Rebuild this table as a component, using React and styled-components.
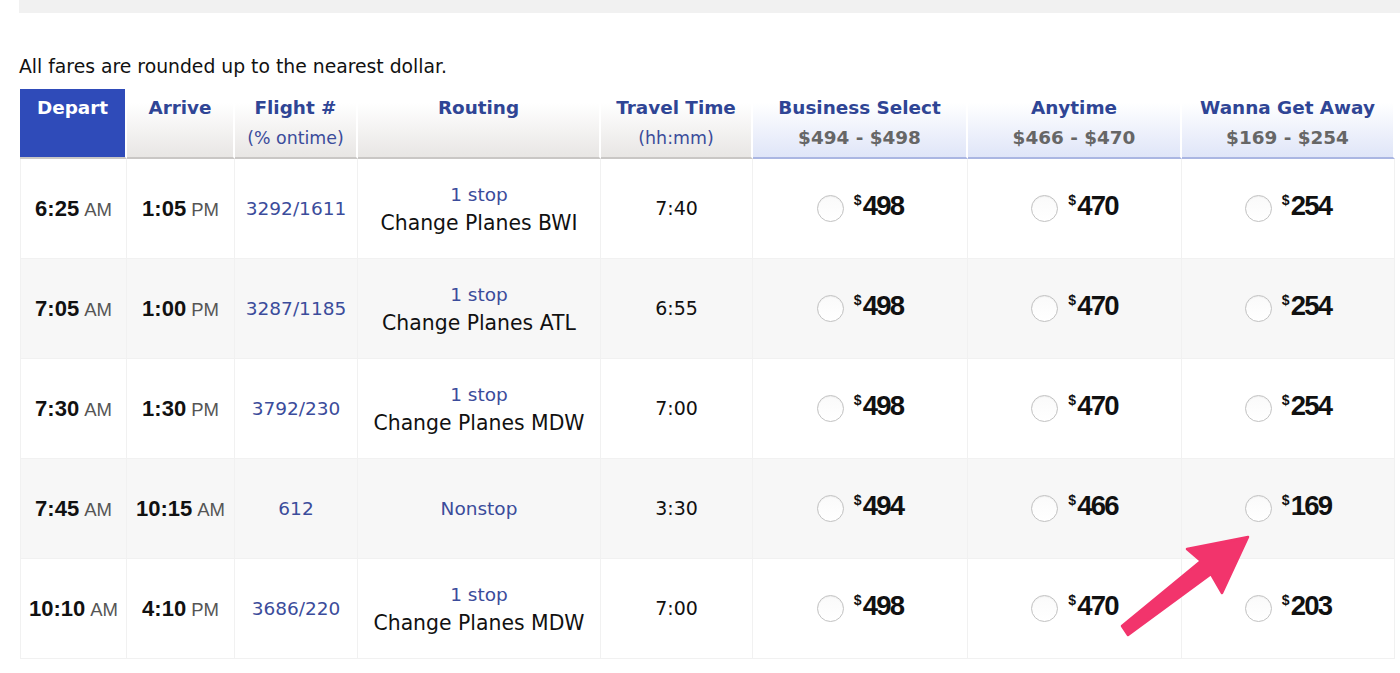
import React from "react"
import styled, { createGlobalStyle } from "styled-components"

const GlobalStyle = createGlobalStyle`
  html, body {
    margin: 0;
    padding: 0;
    background: #fff;
  }
  body {
    font-family: "DejaVu Sans", Verdana, sans-serif;
    color: #111;
  }
`

const Page = styled.div`
  position: relative;
  width: 1400px;
  height: 673px;
  overflow: hidden;
`

const TopBar = styled.div`
  height: 13px;
  margin-left: 19px;
  background: #f1f1f1;
`

const Note = styled.p`
  margin: 43px 0 11px 19px;
  font-size: 18.8px;
  line-height: 22px;
  color: #111;
`

const Table = styled.div`
  display: grid;
  grid-template-columns: 107px 108px 123px 243px 152px 215px 214px 213px;
  margin-left: 20px;
  width: 1375px;
`

const HeadCell = styled.div`
  box-sizing: border-box;
  height: 70px;
  padding-top: 8px;
  text-align: center;
  border-right: 2px solid #fff;
  border-bottom: 2px solid ${p => (p.$fare ? "#aab6e2" : "#c9c7c5")};
  background: ${p =>
    p.$active
      ? "#2f4bb9"
      : p.$fare
      ? "linear-gradient(#fff 20%, #dfe5f8)"
      : "linear-gradient(#fff 20%, #e8e6e4)"};
  &:last-child {
    border-right: none;
  }
`

const HeadTitle = styled.div`
  font-weight: bold;
  font-size: 18.4px;
  line-height: 22px;
  color: ${p => (p.$active ? "#fff" : "#2f4595")};
`

const HeadSub = styled.div`
  margin-top: 8px;
  font-size: 17.4px;
  line-height: 22px;
  color: #3b4c9b;
`

const FareRange = styled.div`
  margin-top: 8px;
  font-weight: bold;
  font-size: 18.4px;
  line-height: 22px;
  color: #666;
`

const Cell = styled.div`
  box-sizing: border-box;
  height: 100px;
  display: flex;
  flex-direction: column;
  align-items: center;
  justify-content: center;
  text-align: center;
  background: ${p => (p.$alt ? "#f7f7f7" : "#fff")};
  border-right: 1px solid #f1f1f1;
  border-bottom: 1px solid #f1f1f1;
  &:nth-child(8n + 1) {
    border-left: 1px solid #f1f1f1;
  }
`

const Time = styled.div`
  font-family: "Liberation Sans", Arial, sans-serif;
  white-space: nowrap;
  b {
    font-size: 22px;
    color: #111;
  }
  span {
    font-size: 18.5px;
    color: #555;
    margin-left: 5px;
  }
`

const LinkText = styled.div`
  font-size: 18.5px;
  line-height: 29px;
  color: #3b4c9b;
`

const Plain = styled.div`
  font-size: ${p => (p.$big ? "20.4px" : "19px")};
  line-height: 29px;
  color: #111;
`

const Fare = styled.label`
  display: flex;
  align-items: center;
  gap: 10px;
`

const Radio = styled.input.attrs({ type: "radio" })`
  appearance: none;
  margin: 0;
  width: 27px;
  height: 27px;
  border-radius: 50%;
  border: 1px solid #c2c2c2;
  background: linear-gradient(#fafafa, #fff);
  box-shadow: inset 0 1px 1px rgba(0, 0, 0, 0.05);
`

const Price = styled.div`
  display: flex;
  align-items: flex-start;
  margin-top: -7px;
  font-family: "Liberation Sans", Arial, sans-serif;
  font-weight: bold;
  color: #111;
  sup {
    font-size: 14px;
    line-height: 1;
    margin-top: 1px;
    margin-right: 1px;
  }
  span {
    font-size: 27.5px;
    line-height: 27px;
    letter-spacing: -1.8px;
  }
`

const Arrow = styled.svg`
  position: absolute;
  left: 0;
  top: 0;
  pointer-events: none;
`

const flights = [
  { dep: "6:25", depM: "AM", arr: "1:05", arrM: "PM", num: "3292/1611", via: "BWI", time: "7:40", fares: [498, 470, 254] },
  { dep: "7:05", depM: "AM", arr: "1:00", arrM: "PM", num: "3287/1185", via: "ATL", time: "6:55", fares: [498, 470, 254] },
  { dep: "7:30", depM: "AM", arr: "1:30", arrM: "PM", num: "3792/230", via: "MDW", time: "7:00", fares: [498, 470, 254] },
  { dep: "7:45", depM: "AM", arr: "10:15", arrM: "AM", num: "612", via: null, time: "3:30", fares: [494, 466, 169] },
  { dep: "10:10", depM: "AM", arr: "4:10", arrM: "PM", num: "3686/220", via: "MDW", time: "7:00", fares: [498, 470, 203] },
]

function Header() {
  return (
    <>
      <HeadCell $active>
        <HeadTitle $active>Depart</HeadTitle>
      </HeadCell>
      <HeadCell>
        <HeadTitle>Arrive</HeadTitle>
      </HeadCell>
      <HeadCell>
        <HeadTitle>Flight #</HeadTitle>
        <HeadSub>(% ontime)</HeadSub>
      </HeadCell>
      <HeadCell>
        <HeadTitle>Routing</HeadTitle>
      </HeadCell>
      <HeadCell>
        <HeadTitle>Travel Time</HeadTitle>
        <HeadSub>(hh:mm)</HeadSub>
      </HeadCell>
      <HeadCell $fare>
        <HeadTitle>Business Select</HeadTitle>
        <FareRange>$494 - $498</FareRange>
      </HeadCell>
      <HeadCell $fare>
        <HeadTitle>Anytime</HeadTitle>
        <FareRange>$466 - $470</FareRange>
      </HeadCell>
      <HeadCell $fare>
        <HeadTitle>Wanna Get Away</HeadTitle>
        <FareRange>$169 - $254</FareRange>
      </HeadCell>
    </>
  )
}

function Row({ f, alt }) {
  return (
    <>
      <Cell $alt={alt}>
        <Time>
          <b>{f.dep}</b>
          <span>{f.depM}</span>
        </Time>
      </Cell>
      <Cell $alt={alt}>
        <Time>
          <b>{f.arr}</b>
          <span>{f.arrM}</span>
        </Time>
      </Cell>
      <Cell $alt={alt}>
        <LinkText>{f.num}</LinkText>
      </Cell>
      <Cell $alt={alt}>
        {f.via ? (
          <>
            <LinkText>1 stop</LinkText>
            <Plain $big>Change Planes {f.via}</Plain>
          </>
        ) : (
          <LinkText>Nonstop</LinkText>
        )}
      </Cell>
      <Cell $alt={alt}>
        <Plain>{f.time}</Plain>
      </Cell>
      {f.fares.map((p, i) => (
        <Cell $alt={alt} key={i}>
          <Fare>
            <Radio name={`fare-${f.num}`} />
            <Price>
              <sup>$</sup>
              <span>{p}</span>
            </Price>
          </Fare>
        </Cell>
      ))}
    </>
  )
}

export default function App() {
  return (
    <Page>
      <GlobalStyle />
      <TopBar />
      <Note>All fares are rounded up to the nearest dollar.</Note>
      <Table>
        <Header />
        {flights.map((f, i) => (
          <Row f={f} alt={i % 2 === 1} key={f.num} />
        ))}
      </Table>
      <Arrow width="1400" height="673" viewBox="0 0 1400 673">
        <polygon
          points="1248,537 1187,549 1201,561 1122,626 1128,635 1211,574 1222,593"
          fill="#f2346c"
          stroke="#f2346c"
          strokeWidth="2.5"
          strokeLinejoin="round"
        />
      </Arrow>
    </Page>
  )
}
